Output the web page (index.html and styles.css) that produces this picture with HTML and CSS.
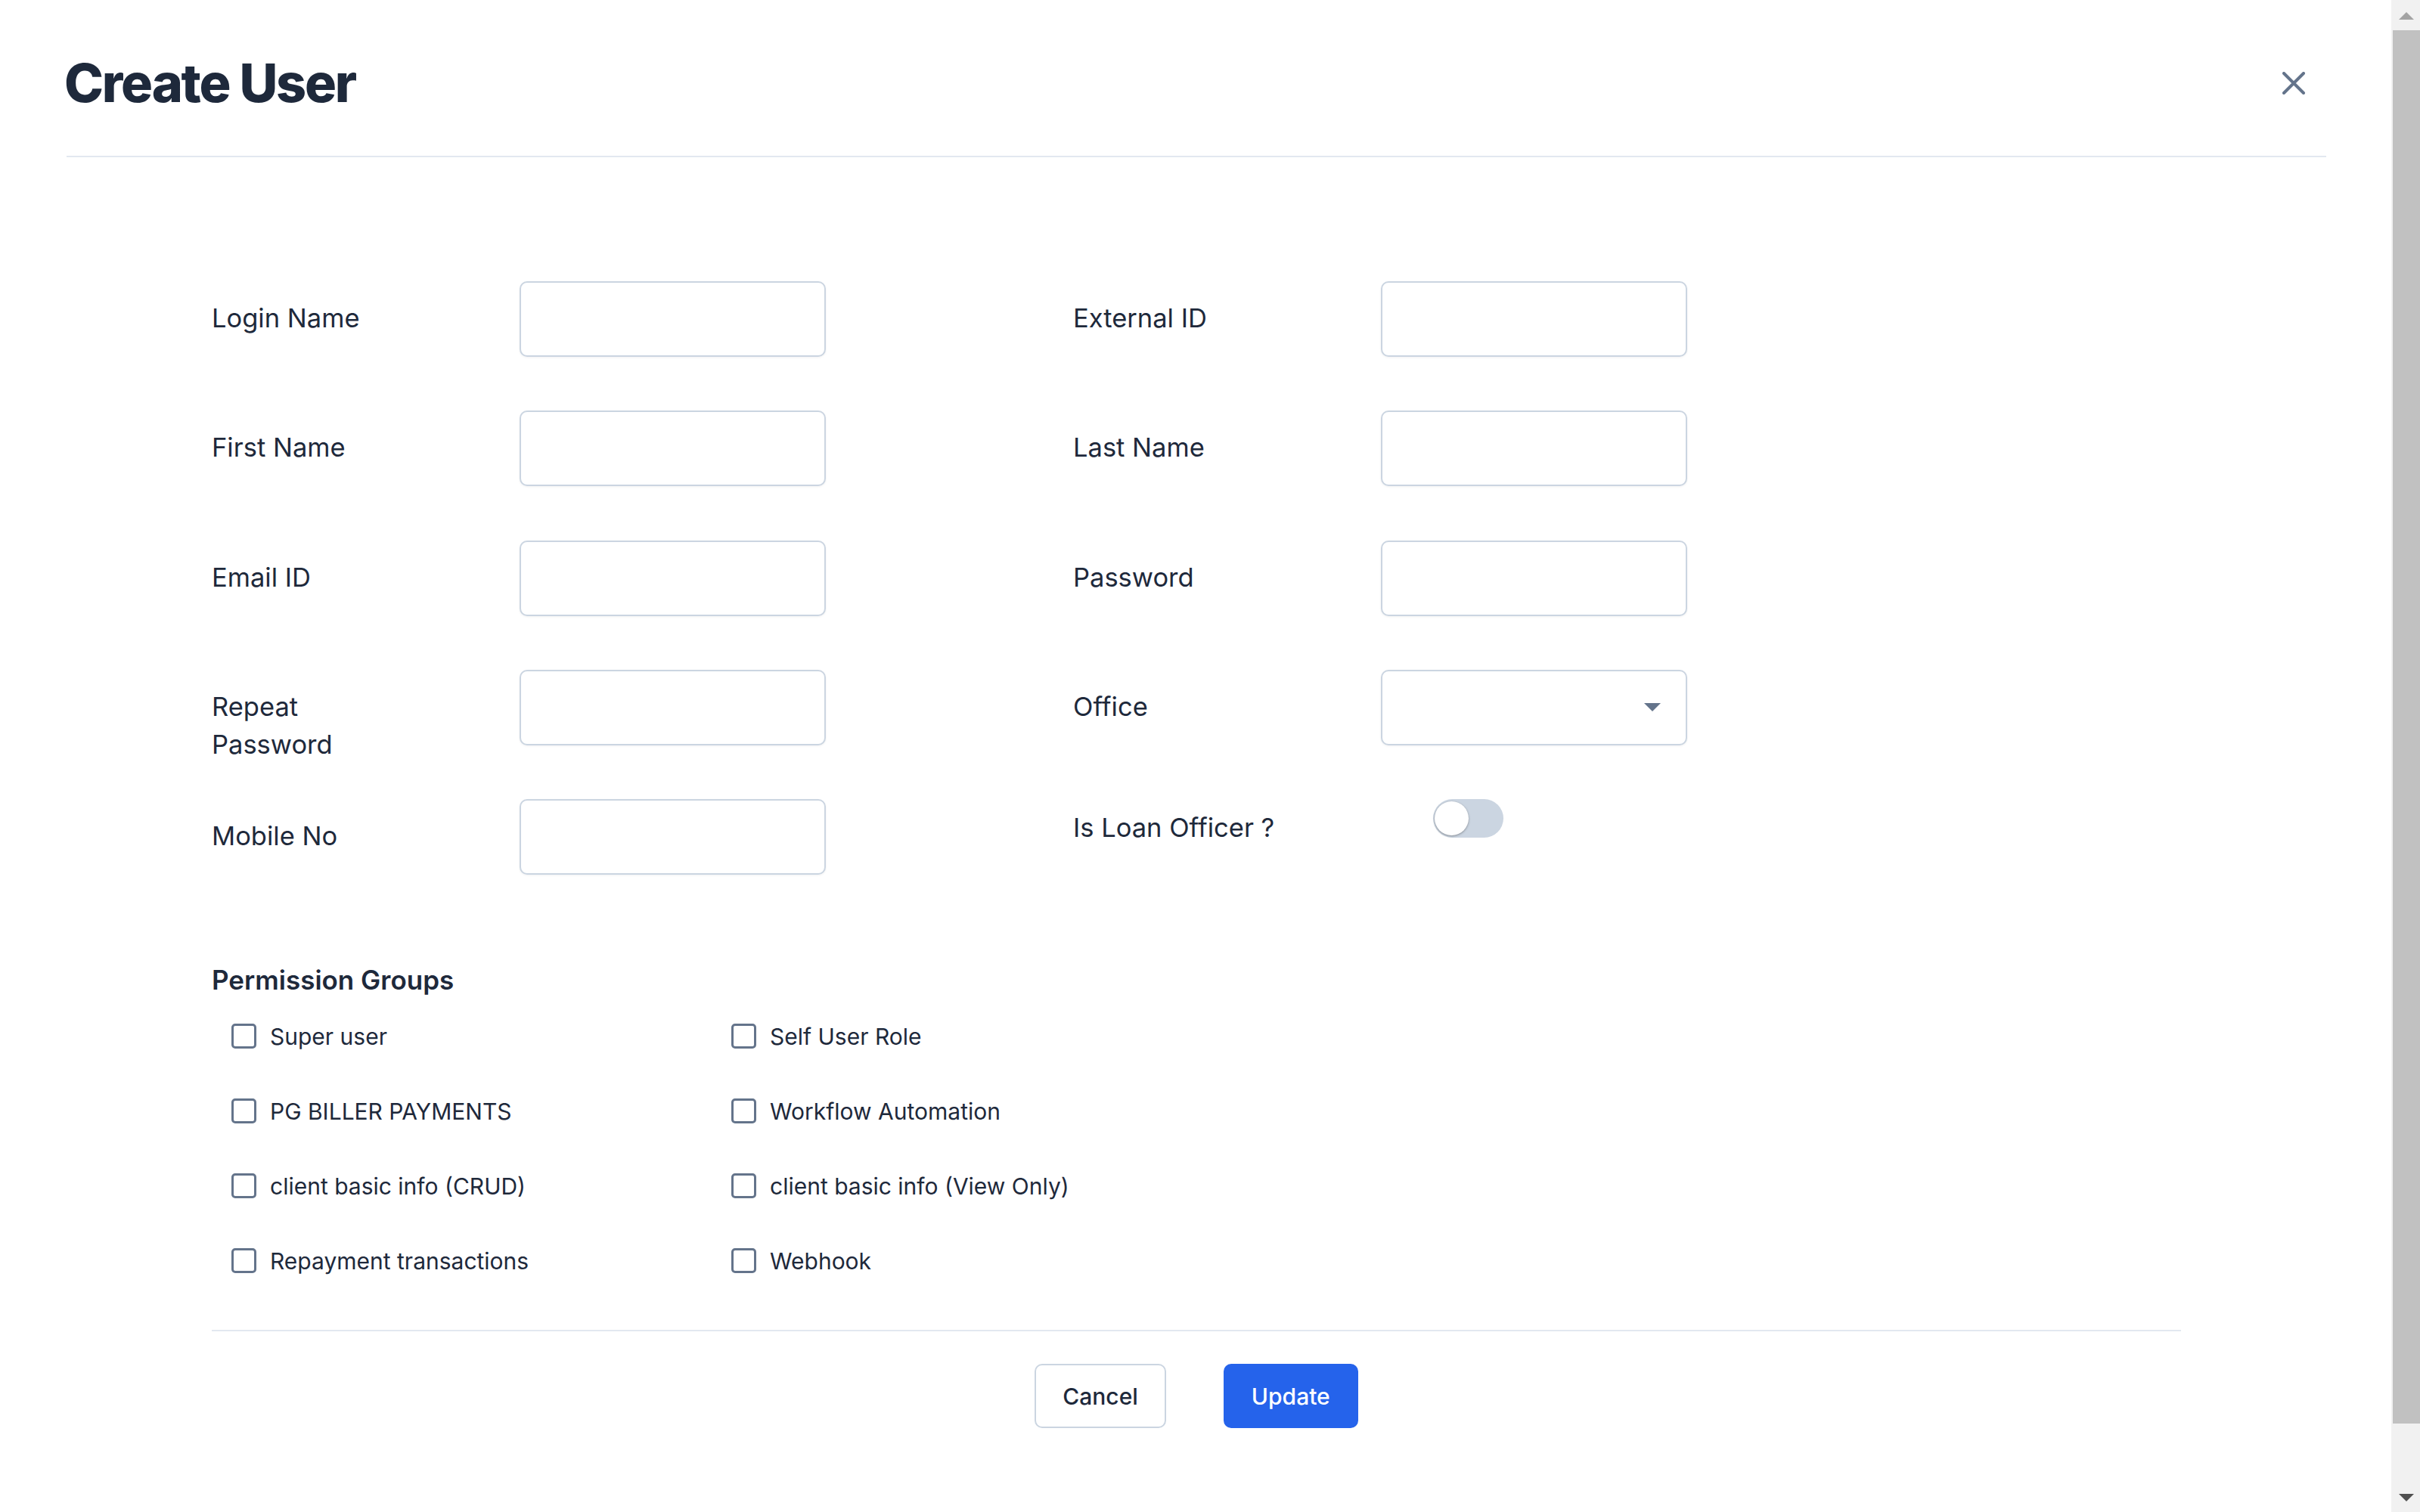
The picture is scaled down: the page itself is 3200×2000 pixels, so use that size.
FILE: index.html
```html
<!DOCTYPE html>
<html lang="en">
<head>
<meta charset="utf-8">
<title>Create User</title>
<link rel="stylesheet" href="styles.css">
</head>
<body>
<div class="page">
  <div class="modal">
    <header class="modal-header">
      <h1 class="title">Create User</h1>
      <button class="close" type="button" aria-label="Close">
        <svg viewBox="0 0 30 30" width="30" height="30"><path d="M2 2 L28 28 M28 2 L2 28"/></svg>
      </button>
    </header>

    <form class="form">
      <div class="fields">
        <div class="field"><label class="field-label">Login Name</label><input class="input" type="text"></div>
        <div class="field"><label class="field-label">External ID</label><input class="input" type="text"></div>
        <div class="field"><label class="field-label">First Name</label><input class="input" type="text"></div>
        <div class="field"><label class="field-label">Last Name</label><input class="input" type="text"></div>
        <div class="field"><label class="field-label">Email ID</label><input class="input" type="text"></div>
        <div class="field"><label class="field-label">Password</label><input class="input" type="password"></div>
        <div class="field"><label class="field-label">Repeat Password</label><input class="input" type="password"></div>
        <div class="field"><label class="field-label">Office</label>
          <div class="input select"><svg class="caret" viewBox="0 0 22 11" width="22" height="11"><polygon points="0,0 22,0 11,11"/></svg></div>
        </div>
        <div class="field"><label class="field-label">Mobile No</label><input class="input" type="text"></div>
        <div class="field toggle-field"><label class="field-label nowrap">Is Loan Officer ?</label>
          <span class="toggle"><span class="knob"></span></span>
        </div>
      </div>

      <section class="perms">
        <h2 class="perms-title">Permission Groups</h2>
        <div class="perm-grid">
          <label class="perm"><span class="box"></span>Super user</label>
          <label class="perm"><span class="box"></span>Self User Role</label>
          <label class="perm"><span class="box"></span>PG BILLER PAYMENTS</label>
          <label class="perm"><span class="box"></span>Workflow Automation</label>
          <label class="perm"><span class="box"></span>client basic info (CRUD)</label>
          <label class="perm"><span class="box"></span>client basic info (View Only)</label>
          <label class="perm"><span class="box"></span>Repayment transactions</label>
          <label class="perm"><span class="box"></span>Webhook</label>
        </div>
      </section>

      <div class="footer">
        <button class="btn cancel" type="button">Cancel</button>
        <button class="btn update" type="button">Update</button>
      </div>
    </form>
  </div>
</div>

<div class="scrollbar" aria-hidden="true">
  <div class="sb-btn"><svg viewBox="0 0 20 10" width="20" height="10"><polygon class="sb-up" points="0,10 20,10 10,0"/></svg></div>
  <div class="sb-thumb"></div>
  <div class="sb-track"></div>
  <div class="sb-btn sb-btn-down"><svg viewBox="0 0 20 10" width="20" height="10"><polygon class="sb-down" points="0,0 20,0 10,10"/></svg></div>
</div>
</body>
</html>
```

FILE: styles.css
```css
* { box-sizing: border-box; }

html, body {
  margin: 0;
  padding: 0;
  background: #ffffff;
}

body {
  height: 100vh;
  overflow: hidden;
  display: flex;
  font-family: "Inter", "Noto Sans", "Liberation Sans", sans-serif;
  color: #1e293b;
}

.page {
  flex: 1;
  min-width: 0;
}

/* drawn scrollbar (the page in the reference is slightly taller than the window) */
.scrollbar {
  width: 38px;
  flex: none;
  height: 100vh;
  display: flex;
  flex-direction: column;
  background: #f1f1f1;
}
.sb-btn {
  height: 40px;
  flex: none;
  display: flex;
  justify-content: center;
  padding-top: 16px;
  padding-left: 2px;
}
.sb-btn svg { display: block; }
.sb-up { fill: #a3a3a3; }
.sb-down { fill: #505050; }
.sb-thumb {
  height: 1843px;
  flex: none;
  margin-left: 2px;
  background: #c1c1c1;
}
.sb-track { flex: 1; }

.modal {
  padding: 0 86px 195px 88px;
}

.modal-header {
  height: 208px;
  padding-top: 14px;
  display: flex;
  align-items: center;
  justify-content: space-between;
  border-bottom: 2px solid #e2e8f0;
}

.title {
  margin: 0 0 0 -3px;
  font-size: 70px;
  font-weight: 800;
  letter-spacing: -2.2px;
  line-height: 1;
  color: #1e293b;
}

.close {
  margin: 0 28px 0 0;
  padding: 0;
  border: 0;
  background: none;
  width: 30px;
  height: 30px;
  display: flex;
}
.close svg path {
  stroke: #64748b;
  stroke-width: 4;
  stroke-linecap: round;
  fill: none;
}

.form {
  margin: 0 192px;
  padding-top: 164px;
}

.fields {
  display: grid;
  grid-template-columns: 1139px 1fr;
  row-gap: 71.25px;
}

.field {
  height: 100px;
  display: grid;
  grid-template-columns: 407px 405px;
  align-items: start;
}

.field-label {
  width: 250px;
  padding-top: 24px;
  font-size: 34.5px;
  line-height: 50px;
  color: #1e293b;
}
.nowrap { white-space: nowrap; width: auto; }

.input {
  width: 405px;
  height: 100px;
  margin: 0;
  border: 2px solid #cbd5e1;
  border-radius: 10px;
  background: #ffffff;
  box-shadow: 0 1px 3px rgba(15, 23, 42, 0.06);
  font: inherit;
}

.select {
  display: flex;
  align-items: center;
  justify-content: flex-end;
  padding-right: 33px;
}
.caret polygon { fill: #64748b; }

.toggle-field {
  grid-template-columns: 476px auto;
}
.toggle-field .field-label { padding-top: 13px; }

.toggle {
  width: 93px;
  height: 51px;
  border-radius: 26px;
  background: #cbd5e1;
  display: flex;
  align-items: center;
  padding-left: 2px;
}
.knob {
  width: 45px;
  height: 45px;
  border-radius: 50%;
  background: #ffffff;
  box-shadow: 0 1px 3px rgba(0, 0, 0, 0.35);
}

.perms {
  margin-top: 114px;
}

.perms-title {
  margin: 0;
  font-size: 35px;
  font-weight: 600;
  line-height: 50px;
  color: #1e293b;
}

.perm-grid {
  display: grid;
  grid-template-columns: 661px 661px;
  grid-auto-rows: 99px;
  padding-left: 26px;
}

.perm {
  display: flex;
  align-items: center;
  gap: 18px;
  font-size: 30px;
  color: #1e293b;
  white-space: nowrap;
}

.box {
  width: 33px;
  height: 33px;
  border: 3px solid #64748b;
  border-radius: 5px;
  background: #ffffff;
  flex: none;
}

.footer {
  margin-top: 42px;
  border-top: 2px solid #e2e8f0;
  padding-top: 43px;
  display: flex;
  justify-content: center;
  gap: 76px;
}

.btn {
  height: 85px;
  padding: 0 35px;
  border-radius: 10px;
  font-family: inherit;
  font-size: 30px;
  font-weight: 500;
  cursor: pointer;
}
.cancel {
  background: #ffffff;
  border: 2px solid #cbd5e1;
  color: #1e293b;
}
.update {
  background: #2563eb;
  border: 2px solid #2563eb;
  color: #ffffff;
}
```
